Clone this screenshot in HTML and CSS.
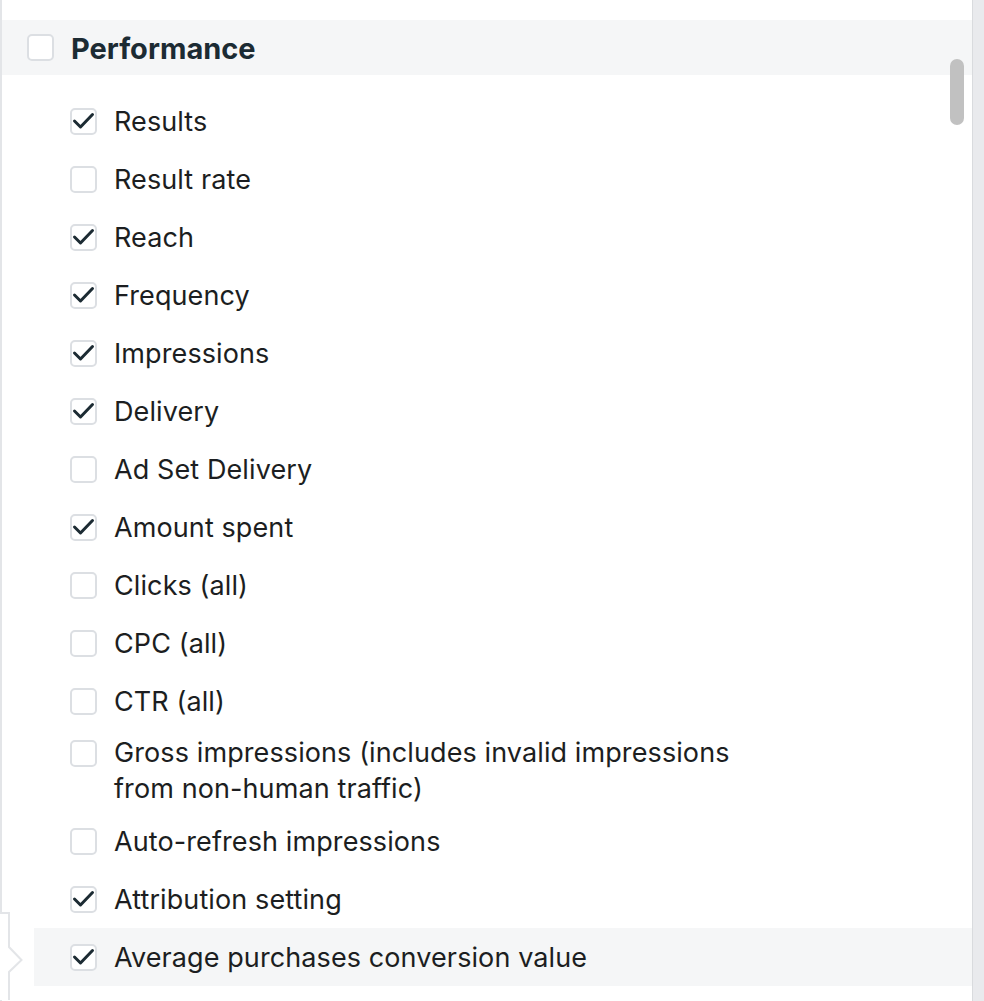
FILE: index.html
```html
<!DOCTYPE html>
<html lang="en">
<head>
<meta charset="utf-8">
<title>Columns</title>
<link rel="stylesheet" href="styles.css">
</head>
<body>
<div class="panel">
  <div class="content">
    <div class="group-header">
      <span class="box"></span>
      <span class="group-title">Performance</span>
    </div>
    <ul class="list">
      <li class="row"><span class="box checked"><svg viewBox="0 0 27 27"><path d="M4.5 13 L10.5 19 L22.5 6.5"/></svg></span><span class="label">Results</span></li>
      <li class="row"><span class="box"></span><span class="label">Result rate</span></li>
      <li class="row"><span class="box checked"><svg viewBox="0 0 27 27"><path d="M4.5 13 L10.5 19 L22.5 6.5"/></svg></span><span class="label">Reach</span></li>
      <li class="row"><span class="box checked"><svg viewBox="0 0 27 27"><path d="M4.5 13 L10.5 19 L22.5 6.5"/></svg></span><span class="label">Frequency</span></li>
      <li class="row"><span class="box checked"><svg viewBox="0 0 27 27"><path d="M4.5 13 L10.5 19 L22.5 6.5"/></svg></span><span class="label">Impressions</span></li>
      <li class="row"><span class="box checked"><svg viewBox="0 0 27 27"><path d="M4.5 13 L10.5 19 L22.5 6.5"/></svg></span><span class="label">Delivery</span></li>
      <li class="row"><span class="box"></span><span class="label">Ad Set Delivery</span></li>
      <li class="row"><span class="box checked"><svg viewBox="0 0 27 27"><path d="M4.5 13 L10.5 19 L22.5 6.5"/></svg></span><span class="label">Amount spent</span></li>
      <li class="row"><span class="box"></span><span class="label">Clicks (all)</span></li>
      <li class="row"><span class="box"></span><span class="label">CPC (all)</span></li>
      <li class="row"><span class="box"></span><span class="label">CTR (all)</span></li>
      <li class="row row-multi"><span class="box"></span><span class="label">Gross impressions (includes invalid impressions from non-human traffic)</span></li>
      <li class="row"><span class="box"></span><span class="label">Auto-refresh impressions</span></li>
      <li class="row"><span class="box checked"><svg viewBox="0 0 27 27"><path d="M4.5 13 L10.5 19 L22.5 6.5"/></svg></span><span class="label">Attribution setting</span></li>
      <li class="row row-hover"><span class="box checked"><svg viewBox="0 0 27 27"><path d="M4.5 13 L10.5 19 L22.5 6.5"/></svg></span><span class="label">Average purchases conversion value</span></li>
    </ul>
  </div>
  <div class="track"></div>
  <div class="thumb"></div>
  <svg class="pointer" viewBox="0 0 26 100" width="26" height="100">
    <path class="pointer-fill" d="M0 0 H2 V13 H9 V47 L21.5 60 L9 72 V100 H0 Z"/>
    <path class="pointer-line" d="M1 0 V13 H9 V47 L21.5 60 L9 72 V100"/>
  </svg>
</div>
</body>
</html>
```
FILE: styles.css
```css
html, body {
  margin: 0;
  padding: 0;
  background: #ffffff;
}

body {
  font-family: "Inter", "Liberation Sans", sans-serif;
  color: #1c2b33;
}

.panel {
  position: relative;
  width: 984px;
  height: 1001px;
  overflow: hidden;
  display: flex;
}

.content {
  flex: 1;
  border-left: 2px solid #e3e5e8;
  padding-top: 20px;
  min-width: 0;
}

.group-header {
  height: 55px;
  background: #f5f6f7;
  display: flex;
  align-items: center;
  gap: 17px;
  padding-left: 25px;
}

.group-title {
  font-size: 29px;
  font-weight: 700;
  color: #1c2b33;
  letter-spacing: 0;
  padding-top: 2px;
}

.box {
  flex: none;
  width: 27px;
  height: 27px;
  box-sizing: border-box;
  border: 2px solid #dcdfe3;
  border-radius: 5px;
  background: #ffffff;
  display: flex;
  align-items: center;
  justify-content: center;
}

.box svg {
  width: 27px;
  height: 27px;
  margin: -2px;
  flex: none;
}

.box svg path {
  fill: none;
  stroke: #1c2b33;
  stroke-width: 3;
  stroke-linecap: round;
  stroke-linejoin: round;
}

.list {
  list-style: none;
  margin: 0;
  padding: 17px 0 0 0;
}

.row {
  display: flex;
  align-items: center;
  gap: 17px;
  min-height: 48px;
  padding: 5px 0 5px 36px;
  margin-left: 32px;
}

.row-multi {
  align-items: flex-start;
}

.row-multi .box {
  margin-top: 5px;
}

.row-multi .label {
  padding-top: 0;
}

.row-hover {
  background: #f5f6f7;
}

.label {
  font-size: 27px;
  line-height: 36px;
  padding-top: 2px;
  color: #1c1e21;
  max-width: 640px;
  letter-spacing: 0.1px;
}

.track {
  flex: none;
  width: 11px;
  border-left: 1px solid #d9dbde;
  background: #e9eaed;
}

.thumb {
  position: absolute;
  left: 950px;
  top: 59px;
  width: 14px;
  height: 66px;
  border-radius: 7px;
  background: #c1c1c1;
}

.pointer {
  position: absolute;
  left: 0;
  top: 900px;
}

.pointer-fill {
  fill: #ffffff;
}

.pointer-line {
  fill: none;
  stroke: #e3e5e8;
  stroke-width: 2;
}
```
